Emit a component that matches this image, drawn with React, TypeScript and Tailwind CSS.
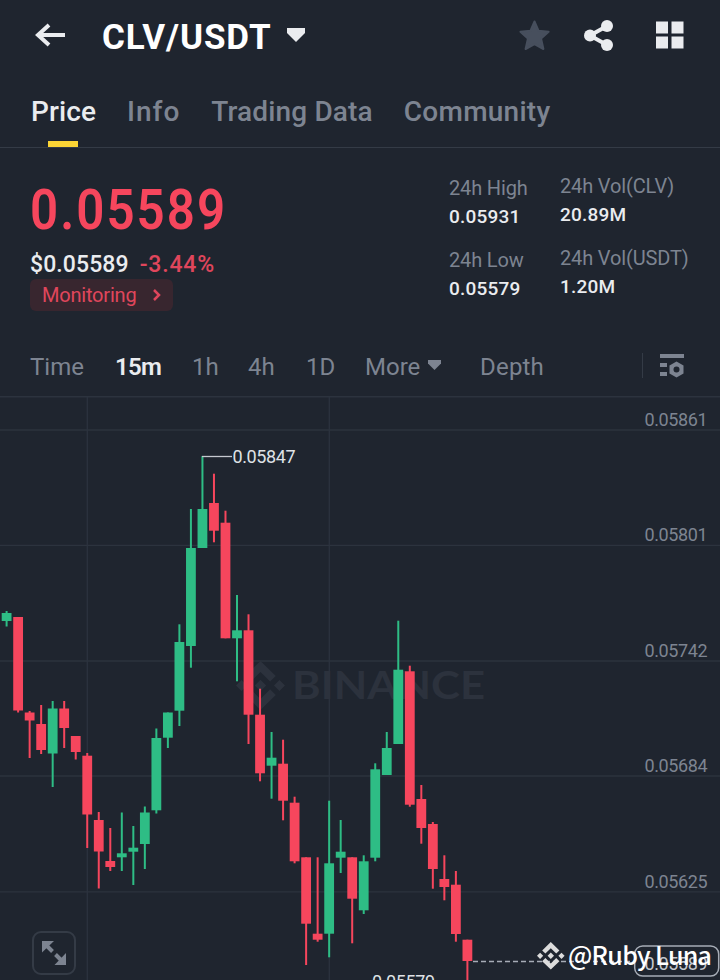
const UP = "#2ebd85";
const DOWN = "#f6465d";

const tabs = [
  { label: "Info", className: "ml-[31px] tracking-[1px]" },
  { label: "Trading Data", className: "ml-[31px] tracking-[0.15px]" },
  { label: "Community", className: "ml-[31px] tracking-[0.25px]" },
];

const intervals = [
  { label: "1h", className: "w-[56px]" },
  { label: "4h", className: "w-[58px]" },
  { label: "1D", className: "w-[59px]" },
];

// [up, high, open/close top, open/close bottom, low]
const candles: [number, number, number, number, number][] = [
  [1, 611, 613, 621, 626.5],
  [0, 617, 617, 710.5, 712.5],
  [0, 711, 712.5, 720.5, 758],
  [0, 705, 724, 750, 754],
  [1, 701, 708.5, 753.5, 787],
  [0, 701, 708.5, 728, 748],
  [0, 736, 736, 752, 759.5],
  [0, 753, 755.7, 814.5, 848],
  [0, 812, 820, 851.5, 888.5],
  [0, 828, 861, 867, 871],
  [1, 812.5, 853.3, 857.3, 871],
  [1, 826, 847.7, 851.7, 885],
  [1, 806.5, 812.5, 844, 869],
  [1, 728.5, 738, 810.3, 813.5],
  [1, 712.5, 712.5, 737.7, 748],
  [1, 624.3, 642, 710.7, 726],
  [1, 509, 548, 646, 667.7],
  [1, 456, 509, 548, 548],
  [0, 473.7, 503, 530.7, 542.3],
  [0, 510.7, 522.7, 638.3, 638.3],
  [1, 595, 630.3, 638.3, 681.3],
  [0, 614.3, 630.3, 714.7, 744],
  [0, 688.7, 714.7, 773.3, 781.3],
  [1, 732, 757.7, 765.7, 798.7],
  [0, 739.7, 763.7, 800.7, 820.3],
  [0, 796.7, 802.7, 861.3, 863.3],
  [0, 857.3, 857.3, 923.7, 965],
  [0, 857.3, 933.7, 939.7, 941.7],
  [1, 800.7, 863.3, 933.7, 957.3],
  [1, 820, 851.7, 857.7, 873],
  [0, 857.3, 857.3, 898.7, 943.3],
  [1, 855.3, 861.3, 910.3, 914],
  [1, 763.3, 769.3, 857.7, 861.3],
  [1, 732, 748, 775, 775],
  [1, 620.7, 669.7, 744, 744],
  [0, 665.7, 671.3, 804.7, 806.7],
  [0, 785, 799, 828, 843.7],
  [0, 822, 824, 869, 888.7],
  [0, 855.3, 879, 887, 900.3],
  [0, 871, 884.7, 934, 941.7],
  [0, 939.7, 939.7, 961, 980],
];

const priceLines = [
  { y: 430, label: "0.05861" },
  { y: 545.3, label: "0.05801" },
  { y: 661, label: "0.05742" },
  { y: 776, label: "0.05684" },
  { y: 891.8, label: "0.05625" },
];

function BinanceMark() {
  return (
    <>
      <path d="M7.3 10.1 12 5.4l4.7 4.7 2.8-2.8L12 0 4.5 7.3z" />
      <path d="M7.3 13.9 12 18.6l4.7-4.7 2.8 2.8L12 24l-7.5-7.3z" />
      <path d="m0 12 2.7-2.7L5.4 12l-2.7 2.7zM18.6 12l2.7-2.7L24 12l-2.7 2.7zM9.2 12 12 9.2l2.8 2.8-2.8 2.8z" />
    </>
  );
}

function Header() {
  return (
    <header className="flex h-[70px] items-center pr-[36px] pl-[34px] text-[#eaecef]">
      <svg width="32" height="24" viewBox="0 0 32 24" fill="none" stroke="currentColor" strokeWidth="4">
        <path d="M31 12H4M15 2 4 12l11 10" />
      </svg>
      <h1 className="mt-[4px] ml-[36px] text-[35px] leading-none font-bold tracking-[0.9px] text-white">CLV/USDT</h1>
      <svg className="ml-[16px]" width="18" height="14" viewBox="0 0 18 14" fill="currentColor">
        <path d="M0 0h18v5l-9 9L0 5z" />
      </svg>
      <svg className="ml-auto" width="31" height="31" viewBox="0 0 31 31" fill="#474f5d" stroke="#474f5d" strokeWidth="2" strokeLinejoin="round">
        <path d="m15.500 1.500 4.100 9.300 10 1-7.500 6.800 2.300 10.400-8.900-4.900-8.900 4.900 2.300-10.400-7.500-6.800 10-1z" />
      </svg>
      <svg className="ml-[34px]" width="29" height="31" viewBox="0 0 29 31" fill="currentColor">
        <path d="M23 6 6 15.500 23 25" fill="none" stroke="currentColor" strokeWidth="4" />
        <circle cx="23" cy="6" r="6" />
        <circle cx="6" cy="15.500" r="6" />
        <circle cx="23" cy="25" r="6" />
      </svg>
      <svg className="ml-[43px]" width="28" height="28" viewBox="0 0 28 28" fill="currentColor">
        <path d="M0 0.500h12v12H0zM15.500 0.500h12v12h-12zM0 15.500h12v12H0zM15.500 15.500h12v12h-12z" />
      </svg>
    </header>
  );
}

function Tabs() {
  return (
    <nav className="flex h-[78px] border-b border-[#343b46] pl-[31px] text-[28px] leading-[84px] font-medium text-[#7d8491]">
      <div className="relative h-[77px] tracking-[0.1px] text-[#eaecef]">
        Price
        <span className="absolute bottom-0 left-[17px] h-[6px] w-[30px] bg-[#fcd535]" />
      </div>
      {tabs.map((tab) => (
        <div key={tab.label} className={tab.className}>
          {tab.label}
        </div>
      ))}
    </nav>
  );
}

function Stat({ label, value }: { label: string; value: string }) {
  return (
    <div className="h-[72px] whitespace-nowrap">
      <div className="text-[20px] leading-[28px] tracking-[-0.15px] text-[#7d8491]">{label}</div>
      <div className="text-[19px] leading-[30px] font-medium tracking-[0.2px] text-[#eaecef]">{value}</div>
    </div>
  );
}

function Summary() {
  return (
    <section className="flex h-[188px]">
      <div className="w-[449px] pt-[34px] pl-[30px]">
        <div className="origin-left scale-x-[0.88] text-[56px] leading-[57px] font-semibold tracking-[2.300px] text-[#f6465d]">
          0.05589
        </div>
        <div className="mt-[12px] flex text-[23px] leading-[28px] font-medium">
          <span className="tracking-[0.1px] text-[#eaecef]">$0.05589</span>
          <span className="ml-[11px] tracking-[0.8px] text-[#e0465c]">-3.44%</span>
        </div>
        <div className="flex h-[32px] w-[143px] items-center rounded-md bg-[#38262f] pl-[12px] text-[20px] tracking-[-0.2px] text-[#e0465c]">
          Monitoring
          <svg className="ml-[17px]" width="8" height="12" viewBox="0 0 8 12" fill="none" stroke="currentColor" strokeWidth="2.500">
            <path d="m1 1 5 5-5 5" />
          </svg>
        </div>
      </div>
      <div className="w-[111px] pt-[26px]">
        <Stat label="24h High" value="0.05931" />
        <Stat label="24h Low" value="0.05579" />
      </div>
      <div className="pt-[24px]">
        <Stat label="24h Vol(CLV)" value="20.89M" />
        <Stat label="24h Vol(USDT)" value="1.20M" />
      </div>
    </section>
  );
}

function Intervals() {
  return (
    <div className="flex h-[60px] items-center pt-[2px] pl-[30px] text-[24px] text-[#7d8491]">
      <div className="w-[85px]">Time</div>
      <div className="w-[77px] font-semibold tracking-[-0.7px] text-[#eaecef]">15m</div>
      {intervals.map((item) => (
        <div key={item.label} className={item.className}>
          {item.label}
        </div>
      ))}
      <div className="flex w-[115px] items-center">
        More
        <svg className="mb-[4px] ml-[8px]" width="13" height="10" viewBox="0 0 13 10" fill="currentColor">
          <path d="M0 0h13v3.500L6.500 10 0 3.500z" />
        </svg>
      </div>
      <div className="tracking-[0.2px]">Depth</div>
      <div className="mr-[17px] mb-[4px] ml-auto h-[25px] w-px bg-[#343b46]" />
      <svg className="mr-[36px] mb-[3px]" width="24" height="24" viewBox="0 0 24 24" fill="currentColor">
        <path d="M0 0h24v4H0zM0 9h7v4H0zM0 18h7v4H0z" />
        <path fillRule="evenodd" d="m16.500 7.500 7 4v8l-7 4-7-4v-8zm0 5a3 3 0 1 0 0 6 3 3 0 0 0 0-6z" />
      </svg>
    </div>
  );
}

function Chart() {
  return (
    <svg width="720" height="584" viewBox="0 396 720 584" className="block">
      <g stroke="#2c333e" strokeWidth="1.300">
        <path d="M0 396.500H720" strokeWidth="2" />
        <path d="M87.300 397V980M329.300 397V980" />
        {priceLines.map((line) => (
          <path key={line.y} d={`M0 ${line.y}H720`} />
        ))}
      </g>

      <g fill="#2c323d">
        <g transform="translate(236 661) scale(2.040)">
          <BinanceMark />
        </g>
        <text
          x="292"
          y="699"
          fontSize="38"
          fontWeight="700"
          textLength="193"
          lengthAdjust="spacingAndGlyphs"
          className="font-[Lato,sans-serif]"
        >
          BINANCE
        </text>
      </g>

      <g fill="#7d8491" fontSize="18">
        {priceLines.map((line) => (
          <text key={line.y} x="644.500" y={line.y - 4.200} textLength="63">
            {line.label}
          </text>
        ))}
      </g>

      {candles.map(([up, high, top, bottom, low], i) => {
        const x = 6.6 + i * 11.52;
        return (
          <g key={i} fill={up ? UP : DOWN}>
            <rect x={x - 1} y={high} width="2" height={low - high} />
            <rect x={x - 4.9} y={top} width="9.800" height={bottom - top} />
          </g>
        );
      })}

      <path d="M202 456.500H232" stroke="#c5c9d0" strokeWidth="1.300" />
      <g fill="#dfe2e6" fontSize="18">
        <text x="232.500" y="463" textLength="63">
          0.05847
        </text>
        <text x="372" y="988" textLength="63">
          0.05579
        </text>
      </g>

      <path d="M473 961.500H635" stroke="#a6acb6" strokeWidth="1.300" strokeDasharray="5 3" />
      <rect x="634.700" y="946" width="84" height="30" rx="8" fill="#1f252f" stroke="#a6acb6" strokeWidth="1.500" />
      <text x="644.500" y="970" fontSize="18" textLength="63" fill="#c5c9d0">
        0.05589
      </text>

      <rect x="33" y="932" width="42" height="42" rx="8" fill="none" stroke="#343b46" strokeWidth="2" />
      <g fill="#7d8491" stroke="#7d8491">
        <path d="M42 941h12L42 952.500z" stroke="none" />
        <path d="M66 965H54.500L66 953z" stroke="none" />
        <path d="m46 945 6.500 6.500M62 961l-6.500-6.500" strokeWidth="4" />
      </g>

      <g fill="#dcdcdc" transform="translate(537 942) scale(1.150)">
        <BinanceMark />
      </g>
      <text x="568" y="965" fontSize="25" fontWeight="500" textLength="144" fill="#fff" className="font-['Noto_Sans_CJK_SC',sans-serif]">
        @Ruby Luna
      </text>
    </svg>
  );
}

export default function App() {
  return (
    <main className="h-[980px] w-[720px] overflow-hidden bg-[#1f252f] font-[Roboto,sans-serif]">
      <Header />
      <Tabs />
      <Summary />
      <Intervals />
      <Chart />
    </main>
  );
}
